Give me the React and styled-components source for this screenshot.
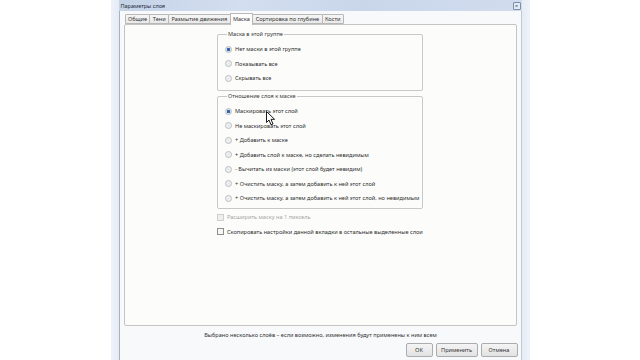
import styled, { createGlobalStyle } from "styled-components";

const Global = createGlobalStyle`
  html, body {
    margin: 0;
    background: #ffffff;
    font-family: "Noto Sans", "Open Sans", sans-serif;
    color: #2b2b2b;
  }
`;

const Page = styled.div`
  width: 640px;
  height: 360px;
  display: flex;
  justify-content: center;
  overflow: hidden;
`;

const Frame = styled.div`
  width: 419px;
  height: 360px;
  padding: 0 8px 0 8px;
  box-sizing: border-box;
  background: linear-gradient(to right, #eef2f9, #e3eaf5 10px, #e3eaf5 calc(100% - 10px), #eef2f9);
  display: flex;
  flex-direction: column;
`;

const TitleBar = styled.div`
  height: 11px;
  display: flex;
  align-items: center;
  justify-content: space-between;
  padding: 0 1px 0 2px;
  background: linear-gradient(to right, #c5d3e7, #d3def0 30%, #c9d6ea 60%, #d1dcee);
  font-size: 5.5px;
  color: #1e2a3a;
`;

const CloseBtn = styled.div`
  width: 8px;
  height: 8px;
  border: 1px solid #7d8ea8;
  border-radius: 1px;
  background: #e4ebf5;
  box-sizing: border-box;
  display: flex;
  align-items: center;
  justify-content: center;
  font-size: 6px;
  line-height: 1;
  color: #44556e;
`;

const Client = styled.div`
  flex: 1;
  background: #f8f9fa;
  border-left: 1px solid #a9b1bb;
  border-right: 1px solid #c2c9d2;
  display: flex;
  flex-direction: column;
`;

const Tabs = styled.div`
  display: flex;
  margin: 2px 0 0 5px;
  height: 11px;
  position: relative;
  z-index: 1;
`;

const Tab = styled.div`
  height: ${(p) => (p.$active ? "12px" : "10px")};
  margin-top: ${(p) => (p.$active ? "0" : "1px")};
  padding: 0 2.4px;
  box-sizing: border-box;
  border: 1px solid #b8b8b8;
  border-bottom: ${(p) => (p.$active ? "none" : "1px solid #b8b8b8")};
  margin-right: -1px;
  background: ${(p) => (p.$active ? "#fdfdfb" : "linear-gradient(#f6f6f6, #e9e9e9)")};
  font-size: 5.6px;
  line-height: ${(p) => (p.$active ? "10px" : "8px")};
  color: #333;
  white-space: nowrap;
  border-radius: 1px 1px 0 0;
`;

const Panel = styled.div`
  margin: 0 4px 0 4px;
  height: 302px;
  box-sizing: border-box;
  border: 1px solid #c4c4c4;
  border-radius: 2px;
  background: #fcfdfb;
  display: flex;
  flex-direction: column;
  align-items: center;
  padding-top: 5px;
`;

const Column = styled.div`
  width: 206px;
  display: flex;
  flex-direction: column;
`;

const Group = styled.fieldset`
  position: relative;
  min-width: 0;
  width: 100%;
  margin: 0 0 ${(p) => p.$gap || 0}px 0;
  padding: 4px 0 0 7px;
  height: ${(p) => p.$h}px;
  box-sizing: border-box;
  border: 1px solid #c8c8c8;
  border-radius: 2px;
  display: flex;
  flex-direction: column;
`;

const Legend = styled.legend`
  font-size: 5.6px;
  color: #3a3a3a;
  padding: 0 1px;
  margin-left: 2px;
  line-height: 8px;
`;

const Option = styled.label`
  display: flex;
  align-items: center;
  height: 14.5px;
  font-size: 5.6px;
  color: ${(p) => (p.$disabled ? "#a5a5a5" : "#2e2e2e")};
  gap: 3px;
  white-space: nowrap;
`;

const Radio = styled.span`
  width: 7px;
  height: 7px;
  border-radius: 50%;
  border: 1px solid #b9bdc3;
  box-sizing: border-box;
  background: ${(p) =>
    p.$on
      ? "radial-gradient(circle, #2f5e9e 0, #3c6fb0 45%, #d6e2f0 55%, #eef2f7 100%)"
      : "radial-gradient(circle, #e6e8eb 0, #f7f7f7 100%)"};
  flex: none;
`;

const Box = styled.span`
  width: 7px;
  height: 7px;
  border: 1px solid ${(p) => (p.$disabled ? "#cfcfcf" : "#8e8e8e")};
  background: ${(p) => (p.$disabled ? "#eeeeee" : "#f7f7f7")};
  box-sizing: border-box;
  flex: none;
`;

const Checks = styled.div`
  display: flex;
  flex-direction: column;
`;

const Cursor = styled.svg`
  position: absolute;
  left: 48px;
  top: 11px;
  width: 10px;
  height: 15px;
`;

const Footer = styled.div`
  display: flex;
  flex-direction: column;
  align-items: center;
  padding: 5px 3px 0 4px;
`;

const Note = styled.div`
  font-size: 5.6px;
  color: #333;
  height: 9px;
  line-height: 9px;
  white-space: nowrap;
`;

const Buttons = styled.div`
  align-self: flex-end;
  display: flex;
  gap: 3px;
  margin-top: 3px;
`;

const Button = styled.button`
  width: ${(p) => p.$w}px;
  height: 14px;
  padding: 0;
  font-family: inherit;
  font-size: 5.6px;
  color: #333;
  border: 1px solid #acacac;
  border-radius: 2px;
  background: linear-gradient(#f4f4f4, #e2e2e2);
`;

const maskGroup = ["Нет маски в этой группе", "Показывать все", "Скрывать все"];

const relation = [
  "Маскировать этот слой",
  "Не маскировать этот слой",
  "+ Добавить к маске",
  "+ Добавить слой к маске, но сделать невидимым",
  "- Вычитать из маски (этот слой будет невидим)",
  "+ Очистить маску, а затем добавить к ней этот слой",
  "+ Очистить маску, а затем добавить к ней этот слой, но невидимым",
];

const tabs = ["Общие", "Тени", "Размытие движения", "Маска", "Сортировка по глубине", "Кости"];

export default function App() {
  return (
    <Page>
      <Global />
      <Frame>
        <TitleBar>
          <span>Параметры слоя</span>
          <CloseBtn>×</CloseBtn>
        </TitleBar>
        <Client>
          <Tabs>
            {tabs.map((t) => (
              <Tab key={t} $active={t === "Маска"}>
                {t}
              </Tab>
            ))}
          </Tabs>
          <Panel>
            <Column>
              <Group $h={61} $gap={1}>
                <Legend>Маска в этой группе</Legend>
                {maskGroup.map((t, i) => (
                  <Option key={t}>
                    <Radio $on={i === 0} />
                    {t}
                  </Option>
                ))}
              </Group>
              <Group $h={117} $gap={1}>
                <Legend>Отношение слоя к маске</Legend>
                {relation.map((t, i) => (
                  <Option key={t}>
                    <Radio $on={i === 0} />
                    {t}
                  </Option>
                ))}
                <Cursor viewBox="0 0 10 15">
                  <path
                    d="M0.5 0.5 L0.5 11.5 L3 9 L5 13.8 L7 13 L5 8.3 L8.6 8.3 Z"
                    fill="#ffffff"
                    stroke="#000000"
                    strokeWidth="0.9"
                    strokeLinejoin="round"
                  />
                </Cursor>
              </Group>
              <Checks>
                <Option $disabled>
                  <Box $disabled />
                  Расширить маску на 1 пиксель
                </Option>
                <Option>
                  <Box />
                  Скопировать настройки данной вкладки в остальные выделенные слои
                </Option>
              </Checks>
            </Column>
          </Panel>
          <Footer>
            <Note>Выбрано несколько слоёв – если возможно, изменения будут применены к ним всем</Note>
            <Buttons>
              <Button $w={27}>OK</Button>
              <Button $w={42}>Применить</Button>
              <Button $w={37}>Отмена</Button>
            </Buttons>
          </Footer>
        </Client>
      </Frame>
    </Page>
  );
}
